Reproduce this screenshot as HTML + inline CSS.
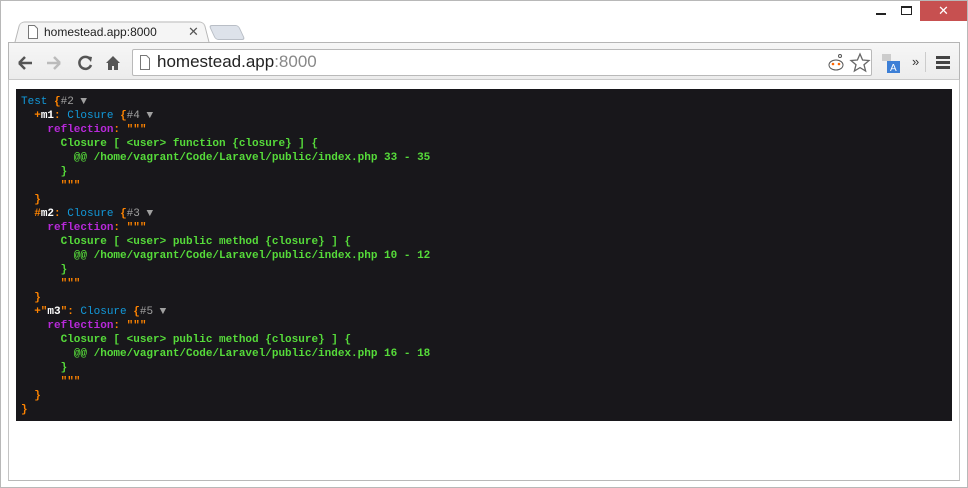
<!DOCTYPE html>
<html><head><meta charset="utf-8"><style>
*{margin:0;padding:0;box-sizing:border-box}
body{width:968px;height:488px;background:#fff;position:relative;overflow:hidden;font-family:"Liberation Sans",sans-serif}
.frame{position:absolute;left:0;top:0;width:968px;height:488px;border:1px solid #b8b8b8;background:#fff}
.tabbar{position:absolute;left:1px;top:1px;width:966px;height:40px;background:#fff}
.tab{position:absolute;left:14px;top:20px;width:196px;height:24px;background:#f5f5f5;border:1px solid #b5b5b5;border-bottom:none;border-radius:5px 5px 0 0;transform:perspective(40px) rotateX(6deg);transform-origin:bottom}
.tabtxt{position:absolute;left:44px;top:25px;font-size:12px;color:#222}
.tabx{position:absolute;left:188px;top:24px;font-size:13px;color:#555}
.newtab{position:absolute;left:212px;top:25px;width:30px;height:15px;background:#dde2ea;border:1px solid #b9bec6;border-radius:3px;transform:skewX(25deg)}
.toolbar{position:absolute;left:8px;top:42px;width:952px;height:38px;background:linear-gradient(#f6f6f6,#ececec);border:1px solid #b5b5b5;border-bottom:1px solid #c9c9c9}
.omni{position:absolute;left:132px;top:49px;width:740px;height:27px;background:#fff;border:1px solid #b9b9b9;border-radius:2px}
.url{position:absolute;left:157px;top:52px;font-size:17px;color:#222}
.url span{color:#888}
.content{position:absolute;left:8px;top:80px;width:952px;height:401px;background:#fff;border-left:1px solid #c4c4c4;border-right:1px solid #c4c4c4;border-bottom:1px solid #b8b8b8}
pre{position:absolute;left:16px;top:89px;width:936px;height:332px;background:#18171b;padding:6px 0 0 5px;font-family:"Liberation Mono",monospace;font-size:11px;line-height:14px;font-weight:bold;color:#fff}
.b{color:#1299da;font-weight:normal}.o{color:#ff8400}.p{color:#b729d9}.g{color:#56db3a}.w{color:#fff}.s{color:#a0a0a0;font-weight:normal}
</style></head><body>
<div class="frame"></div>
<div class="tabbar"></div>
<div class="tab"></div>
<svg style="position:absolute;left:27px;top:25px" width="12" height="14"><path d="M1.5 .5h6l3 3v10h-9z" fill="#fff" stroke="#777"/></svg>
<div class="tabtxt">homestead.app:8000</div>
<div class="tabx">✕</div>
<div class="newtab"></div>
<div style="position:absolute;left:876px;top:13px;width:10px;height:2px;background:#222"></div>
<div style="position:absolute;left:901px;top:6px;width:11px;height:9px;border:1px solid #222;border-top-width:2px"></div>
<div style="position:absolute;left:920px;top:1px;width:47px;height:20px;background:#c75050;color:#fff;font-size:13px;text-align:center;line-height:19px">✕</div>
<div class="toolbar"></div>
<svg style="position:absolute;left:16px;top:53px" width="110" height="20">
<path d="M3 10h13M3 10l6-6M3 10l6 6" stroke="#555" stroke-width="2.5" fill="none"/>
<path d="M31 10h13M44 10l-6-6M44 10l-6 6" stroke="#bbb" stroke-width="2.5" fill="none"/>
<path d="M74 6a6 6 0 1 0 1 6" stroke="#555" stroke-width="2.5" fill="none"/><path d="M70 3l6 1-1 5z" fill="#555"/>
<path d="M90 10l7-7 7 7h-2v7h-4v-4h-2v4h-4v-7z" fill="#555"/>
</svg>
<div class="omni"></div>
<svg style="position:absolute;left:139px;top:55px" width="12" height="15"><path d="M1.5 .5h6l3 3v11h-9z" fill="#fff" stroke="#777"/></svg>
<div class="url">homestead.app<span>:8000</span></div>
<svg style="position:absolute;left:826px;top:52px" width="46" height="22">
<ellipse cx="10" cy="13" rx="7" ry="5" fill="#fff" stroke="#555"/><circle cx="7" cy="12" r="1.3" fill="#f60"/><circle cx="13" cy="12" r="1.3" fill="#f60"/><circle cx="14" cy="4" r="1.5" fill="none" stroke="#555"/>
<path d="M34 2l2.6 6 6.4.5-5 4.2 1.6 6.3-5.6-3.4-5.6 3.4 1.6-6.3-5-4.2 6.4-.5z" fill="none" stroke="#666" stroke-width="1.3"/>
</svg>
<svg style="position:absolute;left:880px;top:52px" width="22" height="22"><path d="M2 2h9v7h-9z" fill="#ccc"/><path d="M7 9h13v12h-13z" fill="#3d7fd6"/><text x="10" y="19" font-size="10" fill="#fff" font-family="Liberation Sans">A</text></svg>
<div style="position:absolute;left:912px;top:54px;font-size:13px;color:#333">»</div>
<div style="position:absolute;left:925px;top:52px;width:1px;height:20px;background:#ccc"></div>
<div style="position:absolute;left:936px;top:56px;width:14px;height:3px;background:#444;box-shadow:0 5px 0 #444,0 10px 0 #444"></div>
<div class="content"></div>
<pre><span class="b">Test</span> <span class="o">{</span><span class="s">#2 ▼</span>
  <span class="o">+</span>m1<span class="o">:</span> <span class="b">Closure</span> <span class="o">{</span><span class="s">#4 ▼</span>
    <span class="p">reflection</span><span class="o">: """</span>
<span class="g">      Closure [ &lt;user&gt; function {closure} ] {
        @@ /home/vagrant/Code/Laravel/public/index.php 33 - 35
      }</span>
      <span class="o">"""</span>
  <span class="o">}</span>
  <span class="o">#</span>m2<span class="o">:</span> <span class="b">Closure</span> <span class="o">{</span><span class="s">#3 ▼</span>
    <span class="p">reflection</span><span class="o">: """</span>
<span class="g">      Closure [ &lt;user&gt; public method {closure} ] {
        @@ /home/vagrant/Code/Laravel/public/index.php 10 - 12
      }</span>
      <span class="o">"""</span>
  <span class="o">}</span>
  <span class="o">+"</span>m3<span class="o">":</span> <span class="b">Closure</span> <span class="o">{</span><span class="s">#5 ▼</span>
    <span class="p">reflection</span><span class="o">: """</span>
<span class="g">      Closure [ &lt;user&gt; public method {closure} ] {
        @@ /home/vagrant/Code/Laravel/public/index.php 16 - 18
      }</span>
      <span class="o">"""</span>
  <span class="o">}</span>
<span class="o">}</span></pre>
</body></html>
